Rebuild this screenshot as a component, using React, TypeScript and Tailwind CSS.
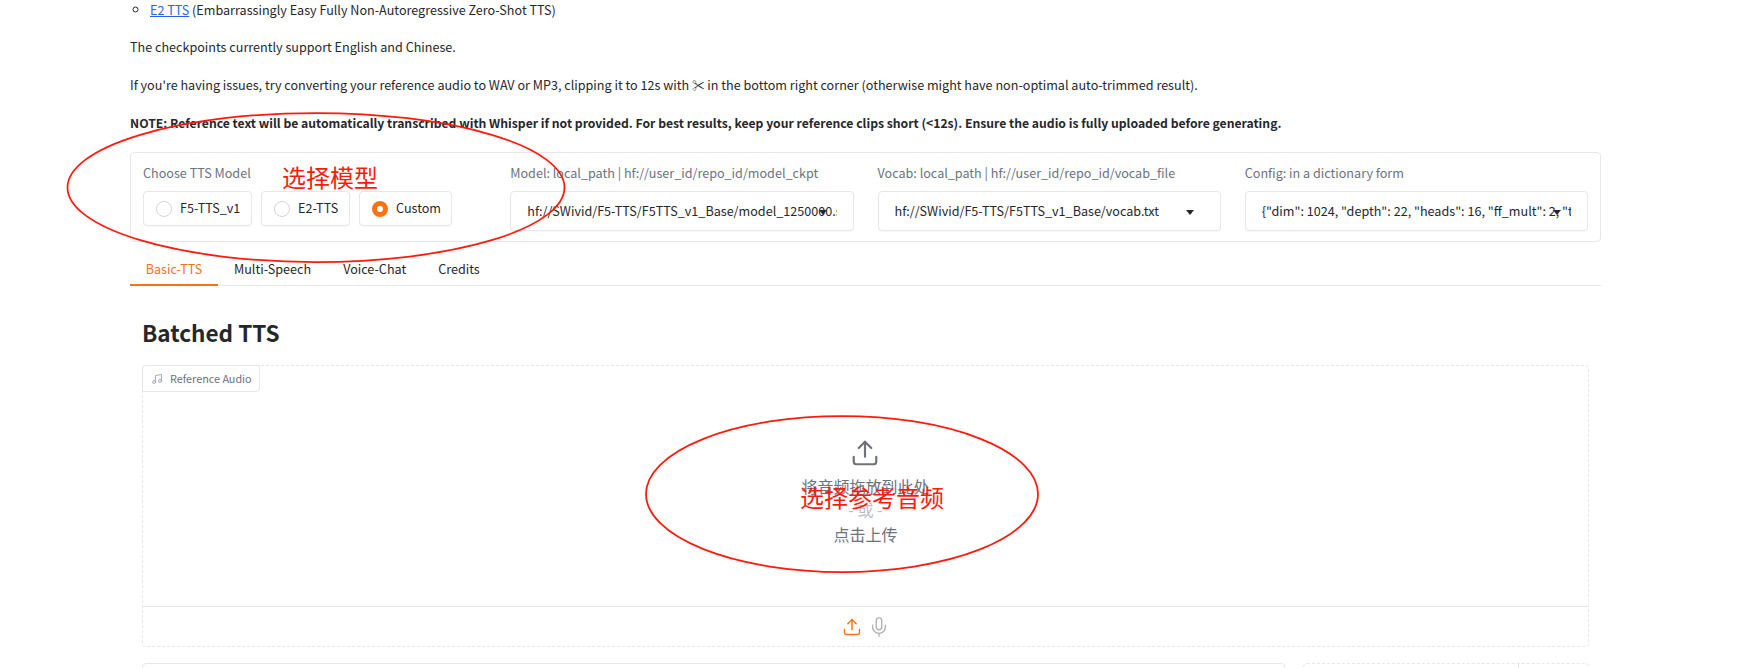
import React from 'react';
import { Upload, Mic, Music } from 'lucide-react';

const Radio: React.FC<{ label: string; checked?: boolean; width: string }> = ({ label, checked, width }) => (
  <div className={`flex items-center h-[35px] pl-3 rounded border border-[#e5e7eb] bg-white shadow-[0_1px_1px_rgba(0,0,0,0.03)] ${width}`}>
    {checked ? (
      <span className="flex items-center justify-center w-4 h-4 rounded-full bg-[#f97316]">
        <span className="w-1.5 h-1.5 rounded-full bg-white" />
      </span>
    ) : (
      <span className="w-4 h-4 rounded-full border border-[#d1d5db] bg-white" />
    )}
    <span className="ml-2 text-[12.6px] text-[#27272a]">{label}</span>
  </div>
);

const Field: React.FC<{ label: string; value: string }> = ({ label, value }) => (
  <div className="flex flex-col min-w-0">
    <div className="text-[12.6px] leading-[19px] text-[#6b7280] h-[28px]">{label}</div>
    <div className="relative h-10 rounded border border-[#e5e7eb] bg-white flex items-center px-4 shadow-[0_1px_1px_rgba(0,0,0,0.03)]">
      <div className="text-[12.6px] text-[#27272a] whitespace-nowrap overflow-hidden">{value}</div>
      <span className="absolute right-[26px] top-[18px] w-0 h-0 border-x-[4px] border-x-transparent border-t-[5px] border-t-[#27272a]" />
    </div>
  </div>
);

export default function App() {
  return (
    <div className="relative h-[668px] overflow-hidden bg-white font-['Noto_Sans_CJK_SC',sans-serif] text-[#27272a]">
      <div className="ml-[130px] w-[1471px]">
        <ul className="-mt-px list-[circle] pl-5 text-[12.6px] leading-[21px]">
          <li>
            <a className="text-[#2563eb] underline">E2 TTS</a> (Embarrassingly Easy Fully Non-Autoregressive Zero-Shot TTS)
          </li>
        </ul>
        <p className="mt-[16px] text-[12.6px] leading-[21px]">The checkpoints currently support English and Chinese.</p>
        <p className="mt-[17px] text-[12.6px] leading-[21px]">
          If you're having issues, try converting your reference audio to WAV or MP3, clipping it to 12s with ✂ in the bottom right corner (otherwise might have non-optimal auto-trimmed result).
        </p>
        <p className="mt-[18px] text-[12.2px] leading-[21px] font-semibold">
          NOTE: Reference text will be automatically transcribed with Whisper if not provided. For best results, keep your reference clips short (&lt;12s). Ensure the audio is fully uploaded before generating.
        </p>

        <div className="mt-[18px] h-[90px] rounded border border-[#e5e7eb] px-3 pt-[10px] grid grid-cols-4 gap-6">
          <div className="flex flex-col">
            <div className="text-[12.6px] leading-[19px] text-[#6b7280] h-[28px]">Choose TTS Model</div>
            <div className="flex gap-[9px]">
              <Radio label="F5-TTS_v1" width="w-[109px]" />
              <Radio label="E2-TTS" width="w-[89px]" />
              <Radio label="Custom" checked width="w-[93px]" />
            </div>
          </div>
          <Field label="Model: local_path | hf://user_id/repo_id/model_ckpt" value="hf://SWivid/F5-TTS/F5TTS_v1_Base/model_1250000.safetensors" />
          <Field label="Vocab: local_path | hf://user_id/repo_id/vocab_file" value="hf://SWivid/F5-TTS/F5TTS_v1_Base/vocab.txt" />
          <Field label={'Config: in a dictionary form'} value={'{"dim": 1024, "depth": 22, "heads": 16, "ff_mult": 2, "text_dim": 512, "conv_layers": 4}'} />
        </div>

        <div className="mt-[15px] flex h-[29px] border-b border-[#e5e7eb] text-[12.6px]">
          <div className="w-[88px] h-[29px] text-center leading-[23px] text-[#f97316] border-b-2 border-[#f97316]">Basic-TTS</div>
          <div className="ml-4 leading-[23px]">Multi-Speech</div>
          <div className="ml-8 leading-[23px]">Voice-Chat</div>
          <div className="ml-8 leading-[23px]">Credits</div>
        </div>

        <div className="px-3">
          <h2 className="mt-[28px] text-[22.5px] leading-[36px] font-semibold">Batched TTS</h2>

          <div className="relative mt-[15px] h-[282px] rounded border border-dashed border-[#e5e7eb] flex flex-col">
            <div className="absolute left-[-1px] top-[-1px] flex items-center w-[118px] h-[27px] pl-2 rounded-br border border-[#e5e7eb] rounded-tl text-[10.8px] text-[#6b7280] bg-white">
              <Music size={12} className="text-[#9ca3af]" strokeWidth={1.75} />
              <span className="ml-[7px]">Reference Audio</span>
            </div>
            <div className="h-[241px] border-b border-[#e5e7eb] flex flex-col items-center text-[#6b7280]">
              <Upload size={30} strokeWidth={1.75} className="mt-[72px] ml-[-2px] text-[#71717a]" />
              <div className="mt-[6px] text-base leading-6">将音频拖放到此处</div>
              <div className="text-base leading-[22px] text-[#9ca3af] opacity-70">- 或 -</div>
              <div className="mt-[2px] text-base leading-6">点击上传</div>
            </div>
            <div className="flex-1 flex items-center justify-center gap-[6px]">
              <Upload size={20} className="text-[#f97316]" strokeWidth={1.75} />
              <Mic size={22} className="text-[#b0b3b8]" strokeWidth={1.5} />
            </div>
          </div>

          <div className="mt-4 flex gap-[18px]">
            <div className="w-[1143px] h-10 rounded border border-[#e5e7eb]" />
            <div className="relative flex-1 h-10 rounded border border-dashed border-[#e5e7eb]">
              <div className="absolute left-[214px] top-0 h-10 border-l border-[#e5e7eb]" />
            </div>
          </div>
        </div>
      </div>

      {/* red annotations drawn over the page */}
      <svg className="absolute left-0 top-0 pointer-events-none" width="1760" height="668" fill="none" stroke="#ff1a0d" strokeWidth="1.75">
        <ellipse cx="316" cy="187.5" rx="248.5" ry="74.5" />
        <ellipse cx="842" cy="494" rx="196" ry="78" />
      </svg>
      <div className="absolute left-[282px] top-[159px] text-2xl leading-9 text-[#ff1a0d]">选择模型</div>
      <div className="absolute left-[800px] top-[479px] text-2xl leading-9 text-[#ff1a0d]">选择参考音频</div>
    </div>
  );
}
